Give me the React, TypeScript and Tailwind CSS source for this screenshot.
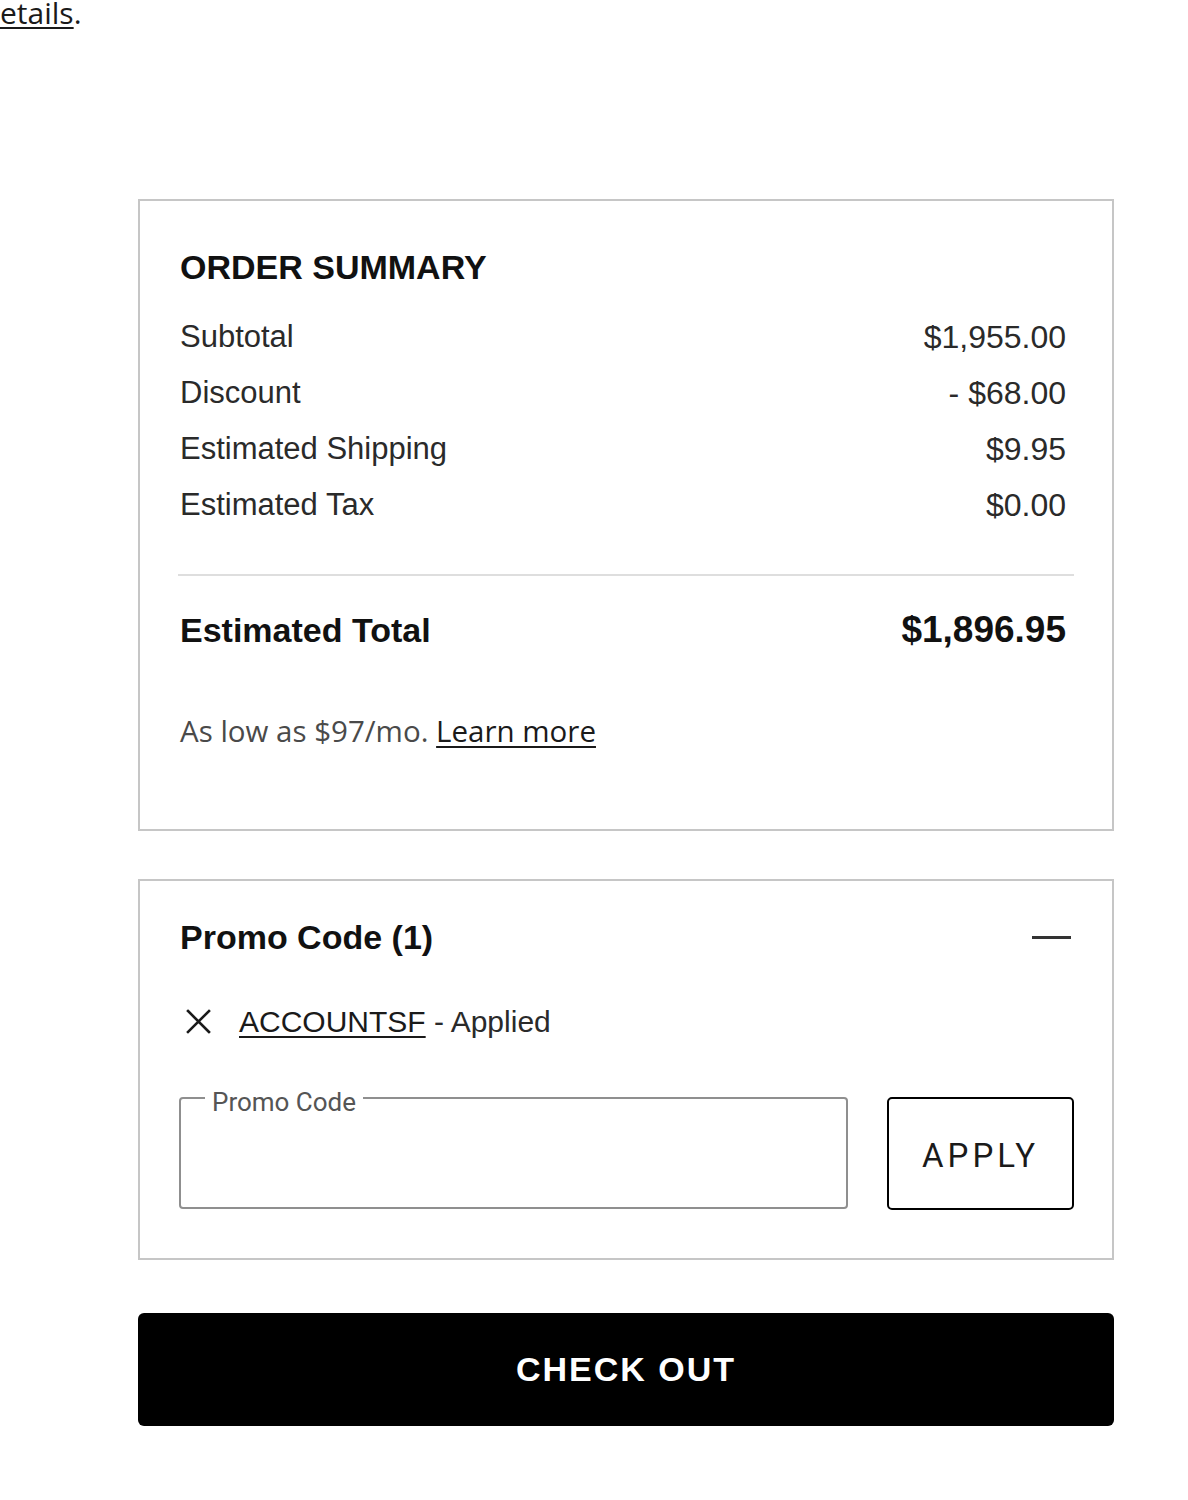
import React from 'react';

const rows = [
    { label: 'Subtotal', value: '$1,955.00' },
    { label: 'Discount', value: '- $68.00' },
    { label: 'Estimated Shipping', value: '$9.95' },
    { label: 'Estimated Tax', value: '$0.00' },
];

const CloseIcon = () => (
    <svg width="25" height="25" viewBox="0 0 25 25" fill="none" stroke="#1a1a1a" strokeWidth="2.6" strokeLinecap="square">
        <path d="M2 2 L23 23 M23 2 L2 23" />
    </svg>
);

export default function App() {
    return (
        <div className="min-h-[1500px] bg-white text-[#1f1f1f] font-['Liberation_Sans',Arial,sans-serif]">
            <p className="mt-[-2px] font-['Open_Sans',sans-serif] text-[30px] leading-[29px] text-[#1a1a1a]">
                <span className="underline decoration-[2px] underline-offset-[3px]">etails</span>.
            </p>

            <div className="ml-[138px] mt-[172px] w-[976px]">
                {/* order summary */}
                <section className="border-2 border-[#c6c6c6] px-[38px] pt-[46px] pb-[78px]">
                    <h2 className="pl-[2px] text-[34px] leading-[40px] font-bold text-[#111]">ORDER SUMMARY</h2>
                    <div className="mt-[22px] pl-[2px] pr-[8px]">
                        {rows.map(r => (
                            <div key={r.label} className="flex justify-between h-[56px] items-center text-[#2a2a2a]">
                                <span className="text-[31px]">{r.label}</span>
                                <span className="text-[32px]">{r.value}</span>
                            </div>
                        ))}
                    </div>
                    <div className="mt-[41px] h-[2px] bg-[#dedede]" />
                    <div className="mt-[26px] pl-[2px] pr-[8px] flex justify-between items-center h-[56px] font-bold text-[#111]">
                        <span className="text-[34px]">Estimated Total</span>
                        <span className="text-[37px]">$1,896.95</span>
                    </div>
                    <p className="mt-[53px] pl-[2px] font-['Open_Sans',sans-serif] text-[29.5px] leading-[40px] text-[#4a4a4a]">
                        As low as $97/mo.{' '}
                        <a className="text-[#1a1a1a] underline decoration-[2px] underline-offset-[4px]">Learn more</a>
                    </p>
                </section>

                {/* promo code */}
                <section className="mt-[48px] border-2 border-[#c6c6c6] px-[38px] pt-[36px] pb-[48px]">
                    <div className="flex items-center justify-between pl-[2px]">
                        <h3 className="text-[34px] leading-[40px] font-bold text-[#111]">Promo Code (1)</h3>
                        <div className="mr-[3px] h-[3px] w-[39px] bg-[#333]" />
                    </div>
                    <div className="mt-[44px] flex items-center h-[40px] pl-[8px] text-[30px] text-[#2a2a2a]">
                        <CloseIcon />
                        <span className="ml-[28px]">
                            <span className="underline decoration-[2px] underline-offset-[4px] text-[#1a1a1a]">ACCOUNTSF</span> - Applied
                        </span>
                    </div>
                    <div className="mt-[56px] flex gap-[39px] pl-[1px]">
                        <div className="relative flex-1 h-[112px] border-2 border-[#8f8f8f] rounded-[4px]">
                            <span className="absolute left-[24px] top-[-12px] bg-white px-[7px] font-['Roboto',sans-serif] text-[26px] leading-[30px] text-[#555]">
                                Promo Code
                            </span>
                        </div>
                        <button className="w-[187px] h-[113px] border-2 border-black rounded-[5px] font-['Roboto',sans-serif] text-[33px] tracking-[4px] text-[#1a1a1a] pt-[4px]">
                            APPLY
                        </button>
                    </div>
                </section>

                <button className="mt-[53px] w-full h-[113px] bg-black rounded-[6px] text-white text-[34px] font-bold tracking-[2px]">
                    CHECK OUT
                </button>
            </div>
        </div>
    );
}
